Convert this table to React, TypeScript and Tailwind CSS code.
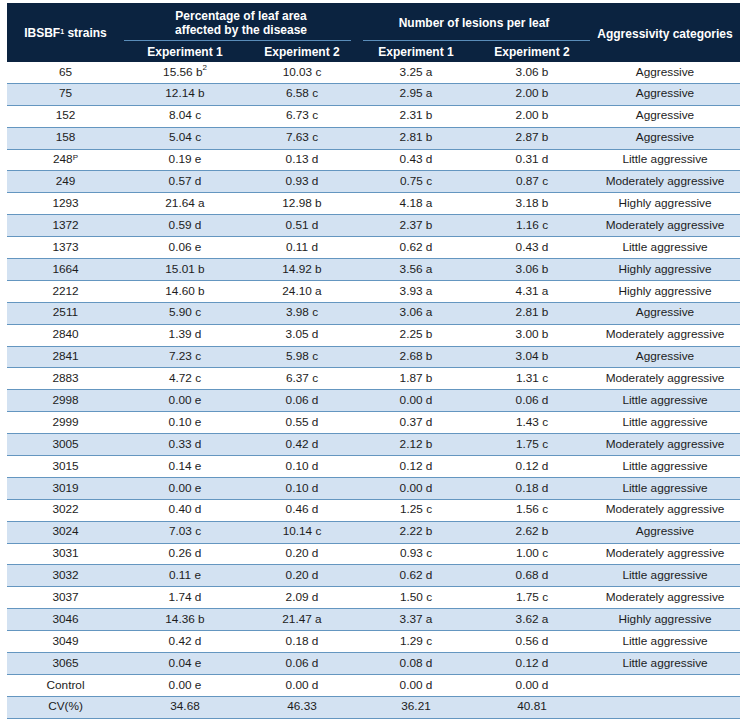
import React from "react";

type Row = {
  strain: React.ReactNode;
  pa1: React.ReactNode;
  pa2: string;
  nl1: string;
  nl2: string;
  cat: string;
};

const rows: Row[] = [
  { strain: "65", pa1: <>15.56 b<sup className="text-[8px]">2</sup></>, pa2: "10.03 c", nl1: "3.25 a", nl2: "3.06 b", cat: "Aggressive" },
  { strain: "75", pa1: "12.14 b", pa2: "6.58 c", nl1: "2.95 a", nl2: "2.00 b", cat: "Aggressive" },
  { strain: "152", pa1: "8.04 c", pa2: "6.73 c", nl1: "2.31 b", nl2: "2.00 b", cat: "Aggressive" },
  { strain: "158", pa1: "5.04 c", pa2: "7.63 c", nl1: "2.81 b", nl2: "2.87 b", cat: "Aggressive" },
  { strain: <>248<span className="text-[8px] relative top-[-2px]">P</span></>, pa1: "0.19 e", pa2: "0.13 d", nl1: "0.43 d", nl2: "0.31 d", cat: "Little aggressive" },
  { strain: "249", pa1: "0.57 d", pa2: "0.93 d", nl1: "0.75 c", nl2: "0.87 c", cat: "Moderately aggressive" },
  { strain: "1293", pa1: "21.64 a", pa2: "12.98 b", nl1: "4.18 a", nl2: "3.18 b", cat: "Highly aggressive" },
  { strain: "1372", pa1: "0.59 d", pa2: "0.51 d", nl1: "2.37 b", nl2: "1.16 c", cat: "Moderately aggressive" },
  { strain: "1373", pa1: "0.06 e", pa2: "0.11 d", nl1: "0.62 d", nl2: "0.43 d", cat: "Little aggressive" },
  { strain: "1664", pa1: "15.01 b", pa2: "14.92 b", nl1: "3.56 a", nl2: "3.06 b", cat: "Highly aggressive" },
  { strain: "2212", pa1: "14.60 b", pa2: "24.10 a", nl1: "3.93 a", nl2: "4.31 a", cat: "Highly aggressive" },
  { strain: "2511", pa1: "5.90 c", pa2: "3.98 c", nl1: "3.06 a", nl2: "2.81 b", cat: "Aggressive" },
  { strain: "2840", pa1: "1.39 d", pa2: "3.05 d", nl1: "2.25 b", nl2: "3.00 b", cat: "Moderately aggressive" },
  { strain: "2841", pa1: "7.23 c", pa2: "5.98 c", nl1: "2.68 b", nl2: "3.04 b", cat: "Aggressive" },
  { strain: "2883", pa1: "4.72 c", pa2: "6.37 c", nl1: "1.87 b", nl2: "1.31 c", cat: "Moderately aggressive" },
  { strain: "2998", pa1: "0.00 e", pa2: "0.06 d", nl1: "0.00 d", nl2: "0.06 d", cat: "Little aggressive" },
  { strain: "2999", pa1: "0.10 e", pa2: "0.55 d", nl1: "0.37 d", nl2: "1.43 c", cat: "Little aggressive" },
  { strain: "3005", pa1: "0.33 d", pa2: "0.42 d", nl1: "2.12 b", nl2: "1.75 c", cat: "Moderately aggressive" },
  { strain: "3015", pa1: "0.14 e", pa2: "0.10 d", nl1: "0.12 d", nl2: "0.12 d", cat: "Little aggressive" },
  { strain: "3019", pa1: "0.00 e", pa2: "0.10 d", nl1: "0.00 d", nl2: "0.18 d", cat: "Little aggressive" },
  { strain: "3022", pa1: "0.40 d", pa2: "0.46 d", nl1: "1.25 c", nl2: "1.56 c", cat: "Moderately aggressive" },
  { strain: "3024", pa1: "7.03 c", pa2: "10.14 c", nl1: "2.22 b", nl2: "2.62 b", cat: "Aggressive" },
  { strain: "3031", pa1: "0.26 d", pa2: "0.20 d", nl1: "0.93 c", nl2: "1.00 c", cat: "Moderately aggressive" },
  { strain: "3032", pa1: "0.11 e", pa2: "0.20 d", nl1: "0.62 d", nl2: "0.68 d", cat: "Little aggressive" },
  { strain: "3037", pa1: "1.74 d", pa2: "2.09 d", nl1: "1.50 c", nl2: "1.75 c", cat: "Moderately aggressive" },
  { strain: "3046", pa1: "14.36 b", pa2: "21.47 a", nl1: "3.37 a", nl2: "3.62 a", cat: "Highly aggressive" },
  { strain: "3049", pa1: "0.42 d", pa2: "0.18 d", nl1: "1.29 c", nl2: "0.56 d", cat: "Little aggressive" },
  { strain: "3065", pa1: "0.04 e", pa2: "0.06 d", nl1: "0.08 d", nl2: "0.12 d", cat: "Little aggressive" },
  { strain: "Control", pa1: "0.00 e", pa2: "0.00 d", nl1: "0.00 d", nl2: "0.00 d", cat: "" },
  { strain: "CV(%)", pa1: "34.68", pa2: "46.33", nl1: "36.21", nl2: "40.81", cat: "" },
];

const cols = "grid grid-cols-[117px_122px_112px_116px_116px_150px]";

export default function App() {
  return (
    <div
      className="w-[750px] h-[727px] bg-white pt-[3px] pl-[7px]"
      style={{ fontFamily: '"Liberation Sans", Arial, sans-serif' }}
    >
      <div className="w-[733px]">
        {/* Header */}
        <div className={`${cols} grid-rows-[38px_21px] bg-[#0b2340] text-white font-bold text-[12px] leading-[14px]`}>
          <div className="row-span-2 flex items-center justify-center pt-[1px]">
            <span>
              IBSBF<sup className="text-[7px]">1</sup> strains
            </span>
          </div>
          <div className="col-span-2 flex flex-col">
            <div className="flex-1 flex items-center justify-center text-center pt-[3px]">
              Percentage of leaf area
              <br />
              affected by the disease
            </div>
            <div className="mr-[7px] border-b border-[#5a8dba]" />
          </div>
          <div className="col-span-2 flex flex-col">
            <div className="flex-1 flex items-center justify-center pt-[3px]">
              Number of lesions per leaf
            </div>
            <div className="ml-[5px] border-b border-[#5a8dba]" />
          </div>
          <div className="row-span-2 flex items-center justify-center pt-[3px]">
            Aggressivity categories
          </div>
          <div className="flex items-center justify-center">Experiment 1</div>
          <div className="flex items-center justify-center">Experiment 2</div>
          <div className="flex items-center justify-center">Experiment 1</div>
          <div className="flex items-center justify-center">Experiment 2</div>
        </div>

        {/* Body */}
        {rows.map((r, i) => (
          <div
            key={i}
            className={`${cols} h-[21.9px] box-border border-b border-[#6496c0] text-[11.8px] text-[#1c1c1c] ${
              i % 2 === 1 ? "bg-[#d3e2f2]" : "bg-white"
            }`}
          >
            <div className="flex items-center justify-center">{r.strain}</div>
            <div className="flex items-center justify-center">{r.pa1}</div>
            <div className="flex items-center justify-center">{r.pa2}</div>
            <div className="flex items-center justify-center">{r.nl1}</div>
            <div className="flex items-center justify-center">{r.nl2}</div>
            <div className="flex items-center justify-center">{r.cat}</div>
          </div>
        ))}
      </div>
    </div>
  );
}
